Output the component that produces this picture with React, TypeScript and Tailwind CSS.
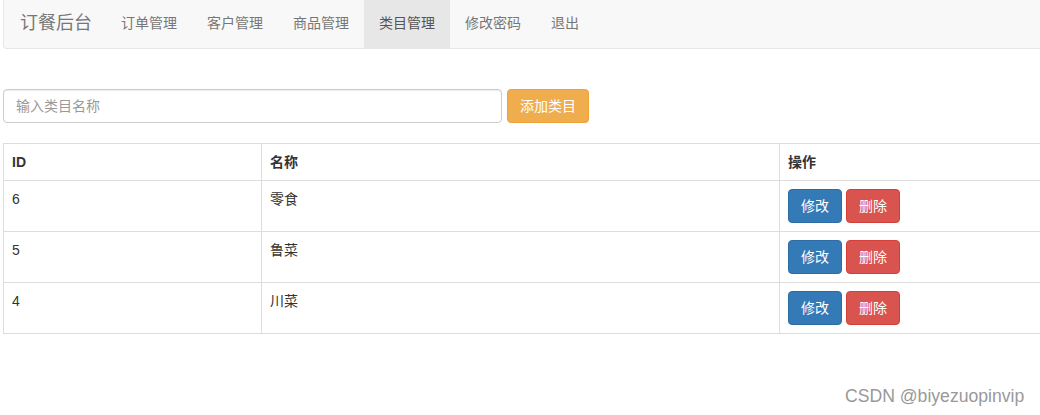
import React from "react";

const rows = [
  { id: 6, name: "零食" },
  { id: 5, name: "鲁菜" },
  { id: 4, name: "川菜" },
];

const navItems = ["订单管理", "客户管理", "商品管理", "类目管理", "修改密码", "退出"];

export default function App() {
  return (
    <div
      className="relative w-[1040px] h-[415px] overflow-hidden bg-white text-[14px] leading-[20px] text-[#333]"
      style={{ fontFamily: '"Liberation Sans", "Noto Sans CJK SC", sans-serif' }}
    >
      <div className="w-[1100px] pl-[3px]">
        <nav className="flex h-[49px] bg-[#f8f8f8] border-l border-b border-[#e7e7e7] rounded-bl-[4px]">
          <div className="pl-[16px] pr-[14px] text-[18px] leading-[47px] text-[#777]">订餐后台</div>
          {navItems.map((t) => (
            <div
              key={t}
              className={
                t === "类目管理"
                  ? "px-[15px] leading-[47px] text-[#555] bg-[#e7e7e7]"
                  : "px-[15px] leading-[47px] text-[#777]"
              }
            >
              {t}
            </div>
          ))}
        </nav>

        <div className="flex mt-[40px]">
          <input
            className="w-[499px] h-[34px] px-[12px] border border-[#ccc] rounded-[4px] text-[14px] text-[#555] placeholder:text-[#999] shadow-[inset_0_1px_1px_rgba(0,0,0,0.075)] outline-none"
            placeholder="输入类目名称"
          />
          <button className="ml-[5px] h-[34px] w-[82px] rounded-[4px] bg-[#f0ad4e] border border-[#eea236] text-white text-[14px]">
            添加类目
          </button>
        </div>

        <table className="mt-[20px] w-[1094px] table-fixed border-collapse border border-[#ddd]">
          <colgroup>
            <col className="w-[258px]" />
            <col className="w-[518px]" />
            <col />
          </colgroup>
          <thead>
            <tr>
              <th className="border border-[#ddd] p-[8px] text-left font-bold">ID</th>
              <th className="border border-[#ddd] p-[8px] text-left font-bold">名称</th>
              <th className="border border-[#ddd] p-[8px] text-left font-bold">操作</th>
            </tr>
          </thead>
          <tbody>
            {rows.map((r) => (
              <tr key={r.id}>
                <td className="border border-[#ddd] p-[8px] align-top">{r.id}</td>
                <td className="border border-[#ddd] p-[8px] align-top">{r.name}</td>
                <td className="border border-[#ddd] p-[8px] align-top">
                  <div className="flex gap-[4px]">
                    <button className="h-[34px] w-[54px] rounded-[4px] bg-[#337ab7] border border-[#2e6da4] text-white text-[14px]">
                      修改
                    </button>
                    <button className="h-[34px] w-[54px] rounded-[4px] bg-[#d9534f] border border-[#d43f3a] text-white text-[14px]">
                      删除
                    </button>
                  </div>
                </td>
              </tr>
            ))}
          </tbody>
        </table>
      </div>

      <div className="absolute left-[845px] top-[385px] text-[17.6px] leading-[22px] text-[#999]">
        CSDN @biyezuopinvip
      </div>
    </div>
  );
}
